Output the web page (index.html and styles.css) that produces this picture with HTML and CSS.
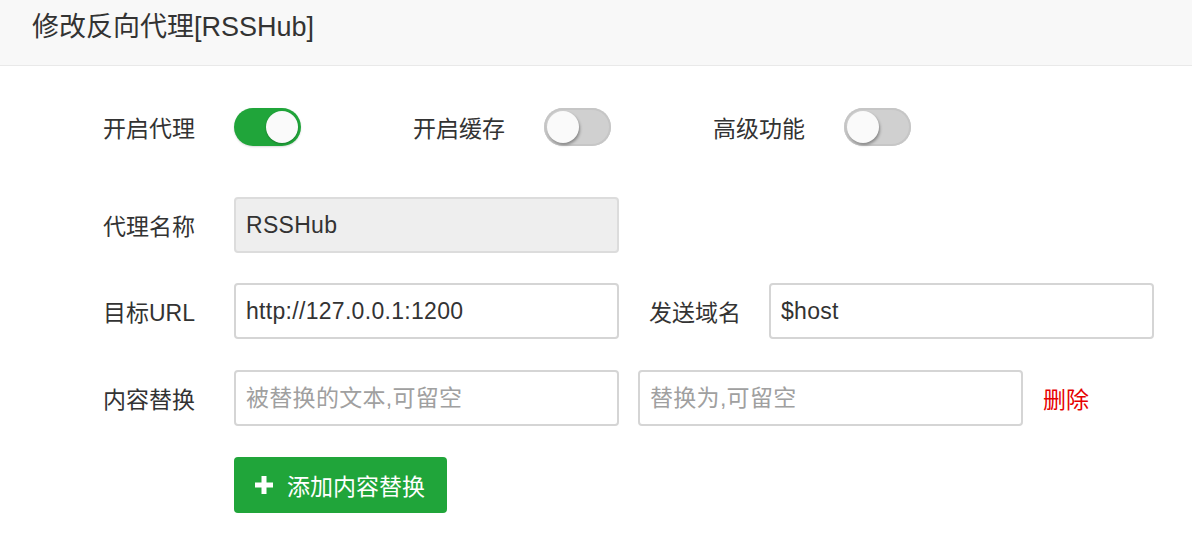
FILE: index.html
```html
<!DOCTYPE html>
<html lang="zh-CN">

<head>
    <meta charset="UTF-8">
    <title>修改反向代理</title>
    <link rel="stylesheet" href="styles.css">
</head>

<body>
    <!-- Dialog title bar -->
    <div class="layer-title">修改反向代理[RSSHub]</div>

    <div class="proxy-form">
        <!-- Switches -->
        <div class="switch-row">
            <div class="switch-group switch-group-wide">
                <span class="form-label">开启代理</span>
                <span class="switch switch-on"><span class="knob"></span></span>
            </div>
            <div class="switch-group">
                <span class="form-label">开启缓存</span>
                <span class="switch"><span class="knob"></span></span>
            </div>
            <div class="switch-group">
                <span class="form-label">高级功能</span>
                <span class="switch"><span class="knob"></span></span>
            </div>
        </div>

        <div class="form-row">
            <span class="form-label">代理名称</span>
            <input type="text" class="form-input" value="RSSHub" disabled>
        </div>

        <div class="form-row">
            <span class="form-label">目标URL</span>
            <input type="text" class="form-input" value="http://127.0.0.1:1200">
            <span class="form-label form-label-inline">发送域名</span>
            <input type="text" class="form-input" value="$host">
        </div>

        <div class="form-row form-row-loose">
            <span class="form-label">内容替换</span>
            <input type="text" class="form-input" placeholder="被替换的文本,可留空">
            <input type="text" class="form-input replace-to" placeholder="替换为,可留空">
            <a class="delete-link">删除</a>
        </div>

        <div class="form-row">
            <span class="form-label"></span>
            <button type="button" class="add-btn">
                <svg class="plus-icon" width="18" height="18" viewBox="0 0 18 18">
                    <path d="M6.5 0h5v6.5H18v5h-6.5V18h-5v-6.5H0v-5h6.5z" fill="#fff" />
                </svg>
                添加内容替换
            </button>
        </div>
    </div>
</body>

</html>
```

FILE: styles.css
```css
body {
    margin: 0;
    font-family: "Liberation Sans", "Noto Sans CJK SC", sans-serif;
    color: #333;
    background-color: #fff;
}

/* Title bar */
.layer-title {
    height: 65px;
    line-height: 54px;
    padding-left: 32px;
    font-size: 27px;
    color: #333;
    background-color: #f8f8f8;
    border-bottom: 1px solid #e9e9e9;
}

.proxy-form {
    padding: 42px 0 0 103px;
}

.form-label {
    display: inline-block;
    width: 131px;
    font-size: 23px;
    color: #333;
}

/* Switch row */
.switch-row {
    display: flex;
    align-items: center;
    height: 38px;
    margin-bottom: 51px;
}

.switch-group {
    display: flex;
    align-items: center;
    width: 300px;
}

.switch-group-wide {
    width: 310px;
}

.switch {
    position: relative;
    width: 67px;
    height: 38px;
    box-sizing: border-box;
    border-radius: 19px;
    background-color: #d0d0d0;
    box-shadow: inset 0 0 0 2px #c6c6c6;
}

.switch .knob {
    position: absolute;
    left: 3px;
    top: 3px;
    width: 32px;
    height: 32px;
    border-radius: 50%;
    background-color: #fafafa;
    box-shadow: 1px 2px 3px rgba(0, 0, 0, 0.35);
}

.switch-on {
    background-color: #20a53a;
    box-shadow: 0 1px 2px rgba(0, 0, 0, 0.15);
}

.switch-on .knob {
    left: 32px;
    box-shadow: 0 1px 2px rgba(0, 0, 0, 0.25);
}

/* Inputs */
.form-row {
    display: flex;
    align-items: center;
    height: 56px;
    margin-bottom: 30px;
}

.form-row-loose {
    margin-top: 31px;
    margin-bottom: 31px;
}

.form-input {
    width: 385px;
    height: 56px;
    box-sizing: border-box;
    padding: 0 10px;
    border: 2px solid #d5d5d5;
    border-radius: 4px;
    font-family: "Liberation Sans", "Noto Sans CJK SC", sans-serif;
    font-size: 23px;
    letter-spacing: 0.3px;
    color: #333;
    background-color: #fff;
    outline: none;
}

.form-input:disabled {
    background-color: #eee;
    border-color: #dcdcdc;
    color: #333;
}

.form-input::placeholder {
    color: #a0a0a0;
}

.form-label-inline {
    width: 120px;
    margin-left: 30px;
}

.replace-to {
    margin-left: 19px;
}

.delete-link {
    margin-left: 20px;
    font-size: 23px;
    color: #e60000;
    cursor: pointer;
}

/* Add button */
.add-btn {
    display: flex;
    align-items: center;
    width: 213px;
    height: 56px;
    padding: 0 0 0 21px;
    border: none;
    border-radius: 4px;
    background-color: #20a53a;
    color: #fff;
    font-family: "Liberation Sans", "Noto Sans CJK SC", sans-serif;
    font-size: 23px;
    cursor: pointer;
}

.plus-icon {
    margin-right: 14px;
}
```
